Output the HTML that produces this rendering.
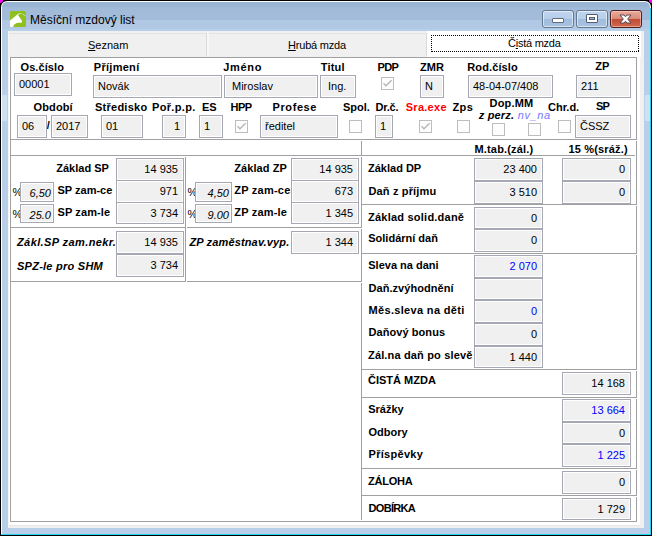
<!DOCTYPE html><html><head><meta charset="utf-8"><title>Měsíční mzdový list</title><style>
html,body{margin:0;padding:0;}
body{width:652px;height:536px;overflow:hidden;background:#000;position:relative;font-family:"Liberation Sans",sans-serif;font-size:11px;color:#000;}
div,span{box-sizing:border-box;}
.abs{position:absolute;}
#frame{position:absolute;left:0;top:0;width:652px;height:536px;background:#000;border-radius:7px 7px 0 0;overflow:hidden;}
#frame2{position:absolute;left:1px;top:1px;width:650px;height:534px;background:#fff;border-radius:6px 6px 0 0;}
#glass{position:absolute;left:2px;top:2px;width:648px;height:532px;border-radius:5px 5px 0 0;
 background:linear-gradient(to bottom,#98b4d3 0px,#9ab6d5 5px,#a1bad9 5px,#a3bcda 18px,#b0c8e4 18px,#b1c9e5 27px,#b6d0ea 27px,#b6d0ea 29px,#b9cfe9 29px,#b9cfe9 100%);}
#cyan{position:absolute;left:1px;top:534px;width:650px;height:1px;background:#22d3f3;}
#cyan2{position:absolute;left:650px;top:8px;width:1px;height:527px;background:#22d3f3;}
.mg{position:absolute;width:3px;height:3px;background:#ff00ff;top:0;}
#client{position:absolute;left:8px;top:31px;width:636px;height:497px;background:#f0f0f0;}
#white{position:absolute;left:9px;top:57px;width:631px;height:468px;background:#fff;}
#title{position:absolute;left:30px;top:13px;font-size:12px;line-height:14px;white-space:nowrap;color:#000;letter-spacing:0px;}
.l{position:absolute;font-weight:bold;font-size:11px;line-height:13px;height:13px;white-space:nowrap;}
.l.red{color:#f00;}
.l.it{font-style:italic;}
.l.nv{font-style:italic;font-weight:normal;color:#7676ff;}
.l.pc{font-weight:normal;}
.b{position:absolute;border:1px solid #a5a8b3;background:#f0f0f0;box-shadow:inset 0 0 0 1px #fff;font-size:11px;white-space:nowrap;overflow:hidden;}
.b span{position:absolute;line-height:13px;height:13px;}
.b.i span{font-style:italic;}
.b.bl span{color:#0000ff;}
.c{position:absolute;width:13px;height:13px;border:1px solid #bdbdbd;background:#fdfdfd;}
.ln{position:absolute;background:#a0a0a0;}
.dot{background:repeating-linear-gradient(90deg,#000 0 1px,transparent 1px 2px) 0 0/100% 1px no-repeat,repeating-linear-gradient(90deg,#000 0 1px,transparent 1px 2px) 1px 100%/100% 1px no-repeat,repeating-linear-gradient(0deg,#000 0 1px,transparent 1px 2px) 0 0/1px 100% no-repeat,repeating-linear-gradient(0deg,#000 0 1px,transparent 1px 2px) 100% 1px/1px 100% no-repeat;}
.tab{position:absolute;top:31px;height:26px;font-size:11px;}
.tab span{position:absolute;line-height:13px;white-space:nowrap;}
.cb{position:absolute;top:10px;height:18px;border:1px solid #64788f;border-radius:3px;box-shadow:inset 0 0 0 1px rgba(255,255,255,.55);}
</style></head><body>
<div class="mg" style="left:0"></div><div class="mg" style="left:649px"></div>
<div id="frame"></div><div id="frame2"></div><div id="glass"></div><div id="cyan"></div><div id="cyan2"></div>
<div class="abs" style="left:2px;top:95px;width:5px;height:26px;background:#cce2f0"></div><div class="abs" style="left:645px;top:95px;width:5px;height:26px;background:#cce2f0"></div>
<svg class="abs" style="left:10px;top:11px" width="16" height="16" viewBox="0 0 16 16"><rect x="0" y="0" width="16" height="16" rx="1.5" fill="#8fc01f"/><path d="M0,16 L0,9.5 L8.3,2.8 C9.5,2.1 12.5,2.0 16,4.9 L16,5.4 C13,3.1 10.5,2.8 9.2,3.3 C8.2,3.8 8.0,4.2 8.2,4.6 L12.2,10 L11.6,11.8 C9,11.6 5.8,11.8 4.3,13.5 C3.6,14.3 3.2,15.2 3.1,16 Z" fill="#fff"/></svg>
<div id="title">Měsíční mzdový list</div>
<div class="cb" style="left:542px;width:32px;background:linear-gradient(#c0d5ee 0,#b6ceea 8px,#a0bcdd 8px,#a9c3e1 16px)"><div class="abs" style="left:9px;top:7px;width:12px;height:5px;background:#fff;border:1px solid #5f6b7a;border-radius:1px"></div></div>
<div class="cb" style="left:576px;width:32px;background:linear-gradient(#c0d5ee 0,#b6ceea 8px,#a0bcdd 8px,#a9c3e1 16px)"><div class="abs" style="left:9px;top:3px;width:12px;height:9px;background:#fff;border:1px solid #525e6e;border-radius:1px"><div class="abs" style="left:2px;top:2px;width:6px;height:3px;background:#9fb7d6;border:1px solid #525e6e"></div></div></div>
<div class="cb" style="left:610px;width:32px;border-color:#4f211e;box-shadow:inset 0 0 0 1px rgba(255,220,210,.5);background:linear-gradient(#e9ab9c 0,#d98a78 8px,#c14a33 8px,#d1694f 16px)"><svg class="abs" style="left:8px;top:2.5px" width="13" height="10" viewBox="-1 -1 13 10"><path d="M0,0 L4,0 L5.5,1.8 L7,0 L11,0 L7.7,4 L11,8 L7,8 L5.5,6.2 L4,8 L0,8 L3.3,4 Z" fill="#fff" stroke="#5b4a55" stroke-width="1" stroke-linejoin="round"/></svg></div>
<div id="client"></div>
<div class="abs" style="left:8px;top:31px;width:1px;height:497px;background:#f4f4f4"></div>
<div class="abs" style="left:9px;top:525px;width:632px;height:1px;background:#e6e6e6"></div>
<div class="abs" style="left:9px;top:33px;width:197px;height:1px;background:#e3e3e3"></div>
<div class="abs" style="left:206px;top:33px;width:1px;height:23px;background:#dadada"></div><div class="abs" style="left:207px;top:33px;width:2px;height:23px;background:#f7f7f7"></div>
<div class="abs" style="left:209px;top:33px;width:217px;height:1px;background:#e3e3e3"></div>
<div class="abs" style="left:426px;top:33px;width:1px;height:23px;background:#dadada"></div>
<div class="tab" style="left:8px;width:198px"><span style="left:80px;top:8px"><u>S</u>eznam</span></div>
<div class="tab" style="left:207px;width:220px"><span style="left:81px;top:8px;letter-spacing:-0.2px"><u>H</u>rubá mzda</span></div>
<div class="tab" style="left:427px;width:214px;background:#fff"><span style="left:81px;top:6px;letter-spacing:-0.25px">Č<u>i</u>stá mzda</span><div class="abs dot" style="left:4px;top:4px;width:208px;height:17px"></div></div>
<div id="white"></div>
<div class="ln" style="left:10px;top:57px;width:627px;height:1px"></div>
<div class="ln" style="left:10px;top:57px;width:1px;height:465px"></div>
<div class="ln" style="left:10px;top:521px;width:627px;height:1px"></div>
<div class="ln" style="left:636px;top:57px;width:1px;height:83px"></div>
<div class="ln" style="left:10px;top:139px;width:627px;height:1px"></div>
<div class="ln" style="left:10px;top:155px;width:625px;height:1px"></div>
<div class="ln" style="left:185px;top:157px;width:1px;height:125px"></div>
<div class="ln" style="left:10px;top:227px;width:352px;height:1px"></div>
<div class="ln" style="left:10px;top:281px;width:352px;height:1px"></div>
<div class="ln" style="left:361px;top:141px;width:1px;height:379px"></div>
<div class="ln" style="left:636px;top:141px;width:1px;height:380px"></div>
<div class="ln" style="left:362px;top:204px;width:275px;height:1px"></div>
<div class="ln" style="left:362px;top:253px;width:275px;height:1px"></div>
<div class="ln" style="left:362px;top:369px;width:275px;height:1px"></div>
<div class="ln" style="left:362px;top:397px;width:275px;height:1px"></div>
<div class="ln" style="left:362px;top:468px;width:275px;height:1px"></div>
<div class="ln" style="left:362px;top:495px;width:275px;height:1px"></div>
<div class="abs" style="left:361px;top:156px;width:1px;height:1px;background:#fff"></div>
<div class="abs" style="left:361px;top:228px;width:1px;height:1px;background:#fff"></div>
<div class="abs" style="left:361px;top:282px;width:1px;height:1px;background:#fff"></div>
<div class="abs" style="left:186px;top:227px;width:1px;height:1px;background:#fff"></div>
<div class="abs" style="left:186px;top:281px;width:1px;height:1px;background:#fff"></div>
<div class="abs" style="left:636px;top:205px;width:1px;height:1px;background:#fff"></div>
<div class="abs" style="left:636px;top:254px;width:1px;height:1px;background:#fff"></div>
<div class="abs" style="left:636px;top:370px;width:1px;height:1px;background:#fff"></div>
<div class="abs" style="left:636px;top:398px;width:1px;height:1px;background:#fff"></div>
<div class="abs" style="left:636px;top:469px;width:1px;height:1px;background:#fff"></div>
<div class="abs" style="left:636px;top:496px;width:1px;height:1px;background:#fff"></div>
<div class="l " id="L0" style="left:20.5px;top:61px;letter-spacing:0.09px">Os.číslo</div>
<div class="l " id="L1" style="left:93.75px;top:61px;letter-spacing:0.29px">Příjmení</div>
<div class="l " id="L2" style="left:223.25px;top:61px;letter-spacing:0.7px">Jméno</div>
<div class="l " id="L3" style="left:320.75px;top:61px;letter-spacing:0.2px">Titul</div>
<div class="l " id="L4" style="left:377.5px;top:61px;letter-spacing:-0.6px">PDP</div>
<div class="l " id="L5" style="left:420px;top:61px;letter-spacing:0px">ZMR</div>
<div class="l " id="L6" style="left:467.25px;top:61px;letter-spacing:0.12px">Rod.číslo</div>
<div class="l " id="L7" style="left:595.25px;top:60px;letter-spacing:0px">ZP</div>
<div class="l " id="L8" style="left:33.6px;top:101px;letter-spacing:0.1px">Období</div>
<div class="l " id="L9" style="left:95px;top:101px;letter-spacing:0.25px">Středisko</div>
<div class="l " id="L10" style="left:152px;top:101px;letter-spacing:0.34px">Poř.p.p.</div>
<div class="l " id="L11" style="left:202px;top:101px;letter-spacing:0px">ES</div>
<div class="l " id="L12" style="left:230.5px;top:101px;letter-spacing:-0.5px">HPP</div>
<div class="l " id="L13" style="left:272.5px;top:101px;letter-spacing:0.6px">Profese</div>
<div class="l " id="L14" style="left:343px;top:101px;letter-spacing:0px">Spol.</div>
<div class="l " id="L15" style="left:375.6px;top:101px;letter-spacing:-0.24px">Dr.č.</div>
<div class="l red" id="L16" style="left:405.75px;top:101px;letter-spacing:0.27px">Sra.exe</div>
<div class="l " id="L17" style="left:452.5px;top:101px;letter-spacing:0.4px">Zps</div>
<div class="l " id="L18" style="left:489.5px;top:97px;letter-spacing:0.2px">Dop.MM</div>
<div class="l it" id="L19" style="left:478.75px;top:109px;letter-spacing:0.17px">z perz.</div>
<div class="l nv" id="L20" style="left:517.75px;top:109px;letter-spacing:0.6px">nv_na</div>
<div class="l " id="L21" style="left:548px;top:101px;letter-spacing:0px">Chr.d.</div>
<div class="l " id="L22" style="left:596px;top:100px;letter-spacing:-0.8px">SP</div>
<div class="l " id="L23" style="left:56.25px;top:162px;letter-spacing:0px">Základ SP</div>
<div class="l " id="L24" style="left:57.5px;top:184px;letter-spacing:0px">SP zam-ce</div>
<div class="l " id="L25" style="left:57.5px;top:206px;letter-spacing:0.1px">SP zam-le</div>
<div class="l it" id="L26" style="left:17px;top:236px;letter-spacing:0.4px">Zákl.SP zam.nekr.</div>
<div class="l it" id="L27" style="left:17px;top:260px;letter-spacing:0.25px">SPZ-le pro SHM</div>
<div class="l " id="L28" style="left:234.25px;top:162px;letter-spacing:0.08px">Základ ZP</div>
<div class="l " id="L29" style="left:234.25px;top:184px;letter-spacing:0.23px">ZP zam-ce</div>
<div class="l " id="L30" style="left:234.25px;top:206px;letter-spacing:0.18px">ZP zam-le</div>
<div class="l it" id="L31" style="left:189.4px;top:236px;letter-spacing:0.15px">ZP zaměstnav.vyp.</div>
<div class="l " id="L32" style="left:474.5px;top:143px;letter-spacing:0.16px">M.tab.(zál.)</div>
<div class="l " id="L33" style="left:568.5px;top:143px;letter-spacing:0.16px">15 %(sráž.)</div>
<div class="l " id="L34" style="left:368px;top:162px;letter-spacing:0px">Základ DP</div>
<div class="l " id="L35" style="left:368.5px;top:185px;letter-spacing:0.15px">Daň z příjmu</div>
<div class="l " id="L36" style="left:368px;top:211px;letter-spacing:0.23px">Základ solid.daně</div>
<div class="l " id="L37" style="left:368.25px;top:232px;letter-spacing:0px">Solidární daň</div>
<div class="l " id="L38" style="left:368.25px;top:259px;letter-spacing:0px">Sleva na dani</div>
<div class="l " id="L39" style="left:368.5px;top:282px;letter-spacing:0.05px">Daň.zvýhodnění</div>
<div class="l " id="L40" style="left:368.5px;top:304px;letter-spacing:0.33px">Měs.sleva na děti</div>
<div class="l " id="L41" style="left:368.5px;top:326px;letter-spacing:0.07px">Daňový bonus</div>
<div class="l " id="L42" style="left:368px;top:349px;letter-spacing:0.16px">Zál.na daň po slevě</div>
<div class="l " id="L43" style="left:368px;top:374px;letter-spacing:0px">ČISTÁ MZDA</div>
<div class="l " id="L44" style="left:368.25px;top:403px;letter-spacing:0px">Srážky</div>
<div class="l " id="L45" style="left:368.5px;top:426px;letter-spacing:0px">Odbory</div>
<div class="l " id="L46" style="left:368.5px;top:448px;letter-spacing:0.3px">Příspěvky</div>
<div class="l " id="L47" style="left:368px;top:475px;letter-spacing:-0.24px">ZÁLOHA</div>
<div class="l " id="L48" style="left:368.5px;top:502px;letter-spacing:-0.67px">DOBÍRKA</div>
<div class="l pc" id="L49" style="left:12.4px;top:186px;letter-spacing:0px">%</div>
<div class="l pc" id="L50" style="left:12.4px;top:208px;letter-spacing:0px">%</div>
<div class="l pc" id="L51" style="left:187.5px;top:186px;letter-spacing:0px">%</div>
<div class="l pc" id="L52" style="left:187.5px;top:208px;letter-spacing:0px">%</div>
<div class="l " id="L53" style="left:46.8px;top:119px;letter-spacing:0px">/</div>
<div class="b " style="left:14px;top:73px;width:58px;height:23px"><span style="left:4px;top:4px">00001</span></div>
<div class="b " style="left:93px;top:75px;width:129px;height:23px"><span style="left:4px;top:4px">Novák</span></div>
<div class="b " style="left:224px;top:75px;width:94px;height:23px"><span style="left:7px;top:4px">Miroslav</span></div>
<div class="b " style="left:320px;top:75px;width:36px;height:23px"><span style="left:7px;top:4px">Ing.</span></div>
<div class="b " style="left:420px;top:75px;width:24px;height:23px"><span style="left:4px;top:4px">N</span></div>
<div class="b " style="left:468px;top:75px;width:85px;height:23px"><span style="left:4px;top:4px">48-04-07/408</span></div>
<div class="b " style="left:576px;top:75px;width:55px;height:23px"><span style="left:4px;top:4px">211</span></div>
<div class="b " style="left:17px;top:115px;width:30px;height:23px"><span style="left:4px;top:4px">06</span></div>
<div class="b " style="left:51px;top:115px;width:37px;height:23px"><span style="left:4px;top:4px">2017</span></div>
<div class="b " style="left:101px;top:115px;width:42px;height:23px"><span style="left:4px;top:4px">01</span></div>
<div class="b " style="left:162px;top:115px;width:24px;height:23px"><span style="right:5px;top:4px">1</span></div>
<div class="b " style="left:199px;top:115px;width:24px;height:23px"><span style="left:4px;top:4px">1</span></div>
<div class="b " style="left:260px;top:115px;width:78px;height:23px"><span style="left:4px;top:4px">ředitel</span></div>
<div class="b " style="left:375px;top:115px;width:18px;height:23px"><span style="left:4px;top:4px">1</span></div>
<div class="b " style="left:575px;top:115px;width:56px;height:23px"><span style="left:4px;top:4px">ČSSZ</span></div>
<div class="b " style="left:116px;top:158px;width:68px;height:23px"><span style="right:5px;top:4px">14 935</span></div>
<div class="b " style="left:116px;top:180px;width:68px;height:23px"><span style="right:5px;top:4px">971</span></div>
<div class="b " style="left:116px;top:202px;width:68px;height:22px"><span style="right:5px;top:4px">3 734</span></div>
<div class="b i" style="left:20px;top:182px;width:34px;height:20px"><span style="right:2px;top:4px">6,50</span></div>
<div class="b i" style="left:20px;top:204px;width:34px;height:19px"><span style="right:2px;top:4px">25.0</span></div>
<div class="b " style="left:116px;top:231px;width:68px;height:23px"><span style="right:5px;top:4px">14 935</span></div>
<div class="b " style="left:116px;top:254px;width:68px;height:23px"><span style="right:5px;top:4px">3 734</span></div>
<div class="b " style="left:291px;top:158px;width:68px;height:23px"><span style="right:5px;top:4px">14 935</span></div>
<div class="b " style="left:291px;top:180px;width:68px;height:23px"><span style="right:5px;top:4px">673</span></div>
<div class="b " style="left:291px;top:202px;width:68px;height:22px"><span style="right:5px;top:4px">1 345</span></div>
<div class="b i" style="left:195px;top:182px;width:37px;height:20px"><span style="right:2px;top:4px">4,50</span></div>
<div class="b i" style="left:195px;top:204px;width:37px;height:19px"><span style="right:2px;top:4px">9.00</span></div>
<div class="b " style="left:291px;top:231px;width:68px;height:23px"><span style="right:5px;top:4px">1 344</span></div>
<div class="b " style="left:474px;top:158px;width:69px;height:23px"><span style="right:5px;top:4px">23 400</span></div>
<div class="b " style="left:474px;top:181px;width:69px;height:23px"><span style="right:5px;top:4px">3 510</span></div>
<div class="b " style="left:562px;top:158px;width:69px;height:23px"><span style="right:5px;top:4px">0</span></div>
<div class="b " style="left:562px;top:181px;width:69px;height:23px"><span style="right:5px;top:4px">0</span></div>
<div class="b " style="left:474px;top:207px;width:69px;height:22px"><span style="right:5px;top:4px">0</span></div>
<div class="b " style="left:474px;top:229px;width:69px;height:23px"><span style="right:5px;top:4px">0</span></div>
<div class="b bl" style="left:474px;top:255px;width:69px;height:23px"><span style="right:5px;top:4px">2 070</span></div>
<div class="b " style="left:474px;top:278px;width:69px;height:22px"><span style="right:5px;top:4px"></span></div>
<div class="b bl" style="left:474px;top:300px;width:69px;height:23px"><span style="right:5px;top:4px">0</span></div>
<div class="b " style="left:474px;top:323px;width:69px;height:23px"><span style="right:5px;top:4px">0</span></div>
<div class="b " style="left:474px;top:346px;width:69px;height:22px"><span style="right:5px;top:4px">1 440</span></div>
<div class="b " style="left:562px;top:372px;width:69px;height:23px"><span style="right:5px;top:4px">14 168</span></div>
<div class="b bl" style="left:562px;top:399px;width:69px;height:23px"><span style="right:5px;top:4px">13 664</span></div>
<div class="b " style="left:562px;top:422px;width:69px;height:22px"><span style="right:5px;top:4px">0</span></div>
<div class="b bl" style="left:562px;top:444px;width:69px;height:23px"><span style="right:5px;top:4px">1 225</span></div>
<div class="b " style="left:562px;top:471px;width:69px;height:23px"><span style="right:5px;top:4px">0</span></div>
<div class="b " style="left:562px;top:498px;width:69px;height:22px"><span style="right:5px;top:4px">1 729</span></div>
<div class="c" style="left:381px;top:77px"><svg class="abs" style="left:0;top:0" width="11" height="11" viewBox="0 0 11 11"><path d="M1.5 5.2 L4 7.8 L9.6 2.2" fill="none" stroke="#b4b4b4" stroke-width="1.3"/></svg></div>
<div class="c" style="left:235px;top:120px"><svg class="abs" style="left:0;top:0" width="11" height="11" viewBox="0 0 11 11"><path d="M1.5 5.2 L4 7.8 L9.6 2.2" fill="none" stroke="#b4b4b4" stroke-width="1.3"/></svg></div>
<div class="c" style="left:349px;top:120px"></div>
<div class="c" style="left:419px;top:120px"><svg class="abs" style="left:0;top:0" width="11" height="11" viewBox="0 0 11 11"><path d="M1.5 5.2 L4 7.8 L9.6 2.2" fill="none" stroke="#b4b4b4" stroke-width="1.3"/></svg></div>
<div class="c" style="left:457px;top:120px"></div>
<div class="c" style="left:492px;top:123px"></div>
<div class="c" style="left:528px;top:123px"></div>
<div class="c" style="left:558px;top:120px"></div>
</body></html>
